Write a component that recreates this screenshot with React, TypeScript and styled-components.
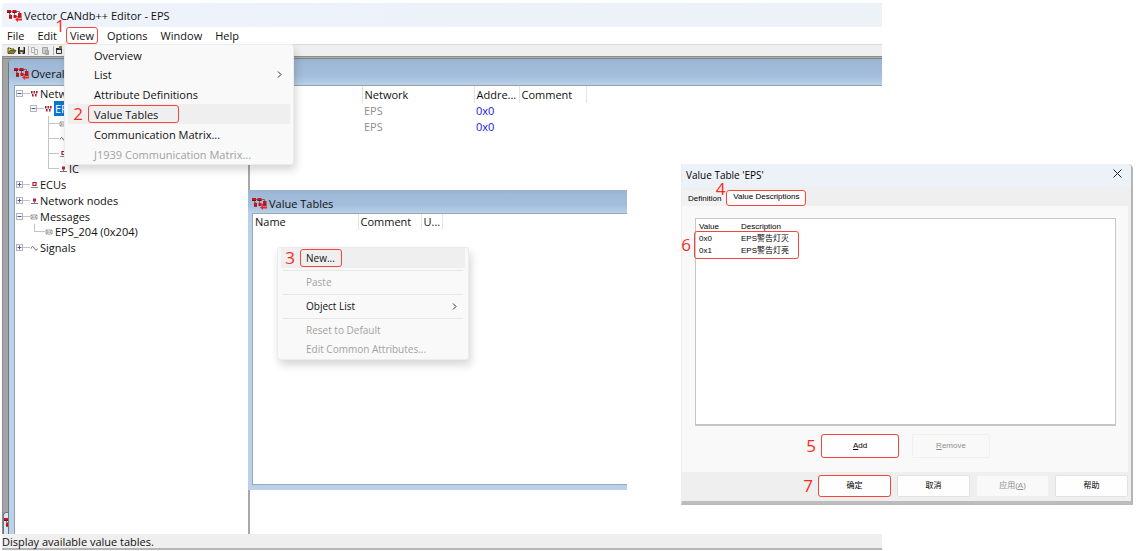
import React from 'react';
import styled, { createGlobalStyle, css } from 'styled-components';

const Global = createGlobalStyle`
  * { box-sizing: border-box; }
  body { margin: 0; background: #fff; color: #111; font: 11px/15px "Open Sans", "Noto Sans", "Noto Sans CJK SC", sans-serif; }
  ul { list-style: none; margin: 0; padding: 0; }
  button { font: inherit; color: inherit; background: none; border: 0; padding: 0; margin: 0; text-align: left; white-space: nowrap; }
`;

const Page = styled.main`
  position: relative;
  min-height: 100vh;
  padding: 3px 254px 1px 2px;
  display: flex;
`;

/* ---------- shared parts ---------- */
const TitleText = styled.h1`
  margin: 0;
  font-size: 11px;
  font-weight: 400;
  white-space: nowrap;
`;

const Highlight = styled.span`
  position: absolute;
  inset: 0;
  border: 1px solid #f5463c;
  border-radius: 3px;
  pointer-events: none;
`;

const StepNumber = styled.span`
  position: absolute;
  z-index: 5;
  right: calc(100% + 5px);
  top: 50%;
  transform: translateY(-50%);
  color: #fb2a20;
  font: 17px/16px "Open Sans", sans-serif;
`;

const CornerNumber = styled(StepNumber)`
  right: calc(100% + 1px);
  top: -7px;
  transform: none;
  line-height: 12px;
`;

const Marked = styled.div<{ $over?: boolean }>`
  position: relative;
  z-index: ${p => (p.$over ? 4 : 0)};
`;

function AppIcon() {
  return (
    <svg width="16" height="13" viewBox="0 0 16 13" aria-hidden="true">
      <path d="M3 2.500H12.500V5M2.500 3.500V5.500H3.500V8M7.500 3V7M9 7.500H12" stroke="#6b4a4c" strokeWidth="0.800" fill="none" />
      <path d="M0 1h4v3H0zM5.500 1h4v3h-4zM2 6h3v3.500H2zM6.500 6h3v3h-3zM11 4h3.500v4.500H11z" fill="#cf1219" />
      <path d="M0 3.200h4V4H0zM5.500 3.200h4V4h-4zM2 8.700h3v0.800H2zM11 7.700h3.500v0.800H11z" fill="#5a1114" />
      <path d="M8 10.500l3-2.500v1.500h4v2h-4V13z" fill="#f4262a" />
    </svg>
  );
}

/* ---------- editor window ---------- */
const Editor = styled.section`
  position: relative;
  flex: 1;
  min-width: 0;
  display: flex;
  flex-direction: column;
  border-bottom: 2px solid #b6b6b6;
`;

const TitleBar = styled.header`
  height: 24px;
  display: flex;
  align-items: center;
  gap: 1px;
  padding-left: 5px;
  background: linear-gradient(90deg, #eef3fc, #edf2f7);
  border-radius: 4px 0 0 0;
`;

const MenuBar = styled.nav`
  height: 18px;
  display: flex;
  align-items: center;
  gap: 5px;
  padding: 0 1px;
  border-bottom: 1px solid #dcdcdc;
`;

const MenuButton = styled.button`
  height: 17px;
  padding: 0 4px;
`;

const Toolbar = styled.div`
  height: 11px;
  display: flex;
  align-items: center;
  padding-left: 5px;
  background: #efefef;
`;

const Workspace = styled.div`
  flex: 1;
  display: flex;
  flex-direction: column;
  min-height: 474px;
  padding: 3px 0 0 5px;
  background: linear-gradient(#8d8d8d 0 1px, #adadad 1px 2px, #858585 2px 3px, #a3a3a3 3px);
  border-left: 1px solid #8c8c8c;
  position: relative;
`;

const MinimizedWindow = styled.div`
  position: absolute;
  left: 0;
  bottom: 0;
  width: 5px;
  height: 22px;
  overflow: hidden;
  padding-top: 4px;
  background: #dce6f1;
  border: 1px solid #71767c;
  border-width: 1px 0 0 1px;
  border-radius: 3px 0 0 0;
`;

const ChildWindow = styled.section`
  flex: 1;
  display: flex;
  flex-direction: column;
  background: #b9d1ea;
  border-left: 1px solid #6d7780;
  padding-left: 5px;
  border-radius: 5px 0 0 0;
`;

const ChildTitle = styled.header<{ $inset?: number }>`
  height: ${p => (p.$inset ? 23 : 26)}px;
  margin-left: -${p => p.$inset || 5}px;
  padding-left: ${p => p.$inset || 5}px;
  padding-top: 3px;
  display: flex;
  align-items: center;
  gap: 1px;
  flex: none;
  background: linear-gradient(#98b3d0, #9fbad8 20%, #a3bdda 65%, #b9d1ea);
  border-radius: ${p => (p.$inset ? 0 : 4)}px 0 0 0;
`;

const Panes = styled.div`
  flex: 1;
  display: grid;
  grid-template-columns: 235px 1fr;
  background: #fff;
  border: 1px solid #9c9fa4;
  border-width: 1px 0 0 1px;
`;

const TreePane = styled.ul`
  display: flex;
  flex-direction: column;
  gap: 1px;
  border-right: 2px solid #a8a8a8;
`;

const TreeRow = styled.div<{ $level: number }>`
  height: 15px;
  display: flex;
  align-items: center;
  padding-left: ${p => 1 + p.$level * 14}px;
  white-space: nowrap;
`;

const Expander = styled.button`
  flex: none;
  width: 7px;
  height: 7px;
  border: 1px solid #b5b5b5;
  background: #fafafa;
  display: flex;
  align-items: center;
  justify-content: center;
`;

const Twig = styled.span<{ $leaf?: boolean; $last?: boolean }>`
  flex: none;
  width: ${p => (p.$leaf ? 11 : 7)}px;
  height: 15px;
  margin-left: ${p => (p.$leaf ? 4 : 0)}px;
  border-left: ${p => (p.$leaf ? '1px solid #c4c4c4' : '0')};
  background: linear-gradient(transparent 7px, #c4c4c4 7px 8px, transparent 8px);
  ${p => p.$last && css`
    border-left: 0;
    background:
      linear-gradient(#c4c4c4, #c4c4c4) 0 0 / 1px 8px no-repeat,
      linear-gradient(transparent 7px, #c4c4c4 7px 8px, transparent 8px);
  `}
`;

const Selected = styled.span`
  background: #0f74d1;
  color: #fff;
  line-height: 15px;
  padding: 0 1px;
`;

const TreeIconBox = styled.svg`
  flex: none;
  width: 8px;
  height: 8px;
  margin-right: 2px;
`;

type IconKind = 'net' | 'ecu' | 'node' | 'msg' | 'sig';

function TreeIcon({ kind }: { kind: IconKind }) {
  return (
    <TreeIconBox viewBox="0 0 8 8" aria-hidden="true">
      {kind === 'net' && <path d="M1 1h1.600v2.500H1zM3.500 1h1.600v2.500H3.500zM6 1h1.600v2.500H6zM2 4h1.600v2.500H2zM5 4h1.600v2.500H5z" fill="#a3203c" />}
      {kind === 'ecu' && <><path d="M3 1.500h3v3H3z" stroke="#b01a38" strokeWidth="1.200" fill="#fff" /><path d="M1 6.500h7" stroke="#888" /></>}
      {kind === 'node' && <><path d="M3 1.500h3v3H3z" fill="#c2183a" /><path d="M4.500 4v2M1 6.500h7" stroke="#777" fill="none" /></>}
      {kind === 'msg' && <path d="M1 2h6v4H1zM1 2l3 2.500L7 2M1 6l2-2M7 6L5 4" stroke="#8c8c8c" strokeWidth="0.800" fill="none" />}
      {kind === 'sig' && <path d="M1 4.500C2 2 3 2 4 4s2.500 3 4 0.500" stroke="#555" fill="none" />}
    </TreeIconBox>
  );
}

function Toggle({ open }: { open?: boolean }) {
  return (
    <Expander aria-label={open ? 'Collapse' : 'Expand'}>
      <svg width="5" height="5" viewBox="0 0 5 5" aria-hidden="true">
        <path d={open ? 'M0.500 2.500h4' : 'M0.500 2.500h4M2.500 0.500v4'} stroke="#3c5fa8" />
      </svg>
    </Expander>
  );
}

function Branch({ label, kind, open, level = 0, selected }: { label: string; kind: IconKind; open?: boolean; level?: number; selected?: boolean }) {
  return (
    <TreeRow $level={level}>
      <Toggle open={open} />
      <Twig />
      <TreeIcon kind={kind} />
      {selected ? <Selected>{label}</Selected> : label}
    </TreeRow>
  );
}

function Leaf({ label, kind, level, last }: { label?: string; kind: IconKind; level: number; last?: boolean }) {
  return (
    <TreeRow $level={level}>
      <Twig $leaf $last={last} />
      <TreeIcon kind={kind} />
      {label}
    </TreeRow>
  );
}

const Grid = styled.table<{ $head: number; $width: number }>`
  border-collapse: collapse;
  table-layout: fixed;
  align-self: start;
  justify-self: start;
  width: ${p => p.$width}px;
  line-height: 16px;

  th, td {
    padding: 0 0 0 2px;
    font-weight: 400;
    text-align: left;
    white-space: nowrap;
    overflow: hidden;
    height: 16px;
  }
  th { height: ${p => p.$head}px; border-right: 1px solid #e3e3e3; }
`;

const Muted = styled.td` color: #8c8c8c; `;
const Address = styled.td` color: #1414e6; `;

const StatusBar = styled.footer`
  height: 14px;
  line-height: 15px;
  background: #efefef;
`;

/* ---------- popup menus ---------- */
const Popup = styled.div<{ $left: number; $top: number; $width: number; $small?: boolean }>`
  position: absolute;
  z-index: 2;
  left: ${p => p.$left}px;
  top: ${p => p.$top}px;
  width: ${p => p.$width}px;
  font-size: ${p => (p.$small ? 10 : 11)}px;
  background: #f9f9f9;
  border: 1px solid #ececec;
  border-radius: 3px;
  box-shadow: 2px 5px 8px rgba(0, 0, 0, 0.16);
`;

const ItemLine = styled.div<{ $h: number; $active?: boolean; $indent: number }>`
  display: flex;
  align-items: center;
  justify-content: space-between;
  height: ${p => p.$h}px;
  margin: 0 3px;
  padding: 0 8px 0 ${p => p.$indent}px;
  background: ${p => (p.$active ? '#efefef' : 'transparent')};
`;

const MenuItem = styled.button<{ $w?: number }>`
  display: block;
  height: 18px;
  width: ${p => (p.$w ? `${p.$w}px` : 'auto')};
  padding: 0 6px;
  &:disabled { color: #a2a2a2; }
`;

const Divider = styled.hr`
  height: 1px;
  margin: 2px 5px;
  border: 0;
  background: #e6e6e6;
`;

function Chevron() {
  return (
    <svg width="5" height="7" viewBox="0 0 5 7" aria-hidden="true">
      <path d="M1 0.500L4 3.500L1 6.500" stroke="#333" fill="none" />
    </svg>
  );
}

/* ---------- value tables window ---------- */
const FloatingWindow = styled.section`
  position: absolute;
  z-index: 1;
  left: 246px;
  right: 255px;
  top: 187px;
  height: 300px;
  display: flex;
  flex-direction: column;
  padding: 0 0 5px 4px;
  background: #b9d1ea;
`;

const FloatingBody = styled.div`
  position: relative;
  flex: 1;
  background: #fff;
  border: 1px solid #9aa7b5;
  border-right: 0;
`;

/* ---------- dialog ---------- */
const Dialog = styled.section`
  position: absolute;
  z-index: 3;
  right: 3px;
  top: 164px;
  width: 452px;
  background: #efefef;
  border-right: 2px solid #b4b4b4;
  border-bottom: 4px solid #bcbcbc;
  border-left: 1px solid #ededed;
  border-radius: 0 5px 0 0;
  font: 8px/12px "Liberation Sans", "Noto Sans CJK SC", sans-serif;
  color: #000;
`;

const DialogTitle = styled.header`
  height: 23px;
  display: flex;
  align-items: center;
  justify-content: space-between;
  padding: 0 9px 0 4px;
  background: #edf2f8;
  border-radius: 0 4px 0 0;
`;

const DialogHeading = styled.h2`
  margin: 0;
  font: 10px/15px "Open Sans", "Noto Sans", sans-serif;
`;

const TabList = styled.div`
  height: 19px;
  display: flex;
  align-items: flex-end;
`;

const Tab = styled.button<{ $active?: boolean }>`
  display: block;
  padding: ${p => (p.$active ? '1px 7px 3px' : '1px 5px 0 6px')};
  height: 16px;
  background: ${p => (p.$active ? '#fbfbfb' : '#f2f2f2')};
`;

const TabPanel = styled.div`
  margin-right: 3px;
  padding: 12px 12px 14px 13px;
  background: #f9f9f9;
`;

const ListBox = styled.div`
  min-height: 208px;
  background: #fff;
  border: 1px solid #c6c6c6;
  border-bottom-width: 2px;
`;

const ValueTable = styled.table`
  border-collapse: collapse;
  table-layout: fixed;
  width: 102px;
  th, td { padding: 0 0 0 3px; height: 12px; font-weight: 400; text-align: left; white-space: nowrap; }
  th { height: 14px; padding-top: 1px; }
  col:first-child { width: 42px; }
`;

const RowsHighlight = styled(Highlight)`
  inset: 12px -1px -2px -2px;
`;

const RowsNumber = styled(StepNumber)`
  top: 26px;
`;

const TableWrap = styled.div`
  position: relative;
  width: 102px;
`;

const Actions = styled.div<{ $end?: boolean }>`
  display: flex;
  justify-content: ${p => (p.$end ? 'flex-end' : 'center')};
  gap: ${p => (p.$end ? 6 : 13)}px;
  padding: ${p => (p.$end ? '3px 3px 4px' : '8px 0 0')};
`;

const PushButton = styled.button<{ $wide?: boolean }>`
  display: block;
  width: ${p => (p.$wide ? 78 : 73)}px;
  height: ${p => (p.$wide ? 24 : 22)}px;
  text-align: center;
  background: #fefefe;
  border: 1px solid #e2e2e2;
  border-radius: 2px;
  &:disabled { color: #8f8f8f; background: #f9f9f9; border-color: #f0f0f0; }
`;

export default function App() {
  return (
    <>
      <Global />
      <Page>
        <Editor>
          <TitleBar><AppIcon /><TitleText>Vector CANdb++ Editor - EPS</TitleText></TitleBar>
          <MenuBar aria-label="Main">
            <MenuButton>File</MenuButton>
            <MenuButton>Edit</MenuButton>
            <Marked $over>
              <MenuButton>View</MenuButton><Highlight /><CornerNumber>1</CornerNumber>
            </Marked>
            <MenuButton>Options</MenuButton>
            <MenuButton>Window</MenuButton>
            <MenuButton>Help</MenuButton>
          </MenuBar>
          <Toolbar>
            <svg width="56" height="9" viewBox="0 0 56 9" aria-hidden="true">
              <path d="M1 7V2h2l1 1h3v1" stroke="#4c4c19" fill="#e7dc69" />
              <path d="M1 7.500l2-3h6l-2 3z" fill="#87832c" stroke="#33330f" strokeWidth="0.700" />
              <path d="M11.500 1.500h6v6h-6z" fill="#55552a" stroke="#1f1f1f" />
              <path d="M13 1h3.500v3H13z" fill="#eee" /><path d="M13.500 6h2v2h-2z" fill="#ddd" />
              <path d="M21.500 0v9M46.500 0v9" stroke="#b4b4b4" />
              <path d="M24.500 1.500h3v5h-3zM27.500 3.500h3v5h-3z" fill="#eee" stroke="#b0b0b0" />
              <path d="M35.500 1.500h5v6h-5zM38.500 4.500h3v4h-3z" fill="#ccc" stroke="#a2a2a2" />
              <path d="M49.500 2.500h5v5h-5z" fill="#e9e9e9" stroke="#33334f" /><path d="M49 2h6v2h-6z" fill="#24243c" /><path d="M52 0h3v3h-3z" fill="#8a7b22" />
            </svg>
          </Toolbar>
          <Workspace>
            <MinimizedWindow><AppIcon /></MinimizedWindow>
            <ChildWindow>
              <ChildTitle><AppIcon /><TitleText as="h2">Overall View</TitleText></ChildTitle>
              <Panes>
                <TreePane>
                  <li>
                    <Branch label="Networks" kind="net" open />
                    <Branch label="EPS" kind="net" open level={1} selected />
                    <Leaf kind="msg" level={2} />
                    <Leaf kind="sig" level={2} />
                    <Leaf kind="ecu" level={2} />
                    <Leaf label="IC" kind="node" level={2} last />
                  </li>
                  <li><Branch label="ECUs" kind="ecu" /></li>
                  <li><Branch label="Network nodes" kind="node" /></li>
                  <li>
                    <Branch label="Messages" kind="msg" open />
                    <Leaf label="EPS_204 (0x204)" kind="msg" level={1} last />
                  </li>
                  <li><Branch label="Signals" kind="sig" /></li>
                </TreePane>
                <Grid $width={336} $head={17}>
                  <colgroup><col width="112" /><col width="112" /><col width="45" /><col width="67" /></colgroup>
                  <thead><tr><th /><th>Network</th><th>Addre...</th><th>Comment</th></tr></thead>
                  <tbody>
                    <tr><td /><Muted>EPS</Muted><Address>0x0</Address><td /></tr>
                    <tr><td /><Muted>EPS</Muted><Address>0x0</Address><td /></tr>
                  </tbody>
                </Grid>
              </Panes>
            </ChildWindow>
          </Workspace>
          <StatusBar>Display available value tables.</StatusBar>

          <Popup $left={62} $top={41} $width={230}>
            <ItemLine $h={20} $indent={20}><MenuItem>Overview</MenuItem></ItemLine>
            <ItemLine $h={19} $indent={20}><MenuItem>List</MenuItem><Chevron /></ItemLine>
            <ItemLine $h={20} $indent={20}><MenuItem>Attribute Definitions</MenuItem></ItemLine>
            <ItemLine $h={20} $indent={20} $active>
              <Marked><MenuItem $w={91}>Value Tables</MenuItem><Highlight /><StepNumber>2</StepNumber></Marked>
            </ItemLine>
            <ItemLine $h={20} $indent={20}><MenuItem>Communication Matrix...</MenuItem></ItemLine>
            <ItemLine $h={20} $indent={20}><MenuItem disabled>J1939 Communication Matrix...</MenuItem></ItemLine>
          </Popup>

          <FloatingWindow>
            <ChildTitle $inset={4}><AppIcon /><TitleText as="h2">Value Tables</TitleText></ChildTitle>
            <FloatingBody>
              <Grid $width={189} $head={16}>
                <colgroup><col width="105" /><col width="63" /><col width="21" /></colgroup>
                <thead><tr><th>Name</th><th>Comment</th><th>U...</th></tr></thead>
              </Grid>
              <Popup $left={24} $top={33} $width={192} $small>
                <ItemLine $h={20} $indent={19} $active>
                  <Marked><MenuItem $w={42}>New...</MenuItem><Highlight /><StepNumber>3</StepNumber></Marked>
                </ItemLine>
                <Divider />
                <ItemLine $h={19} $indent={19}><MenuItem disabled>Paste</MenuItem></ItemLine>
                <Divider />
                <ItemLine $h={19} $indent={19}><MenuItem>Object List</MenuItem><Chevron /></ItemLine>
                <Divider />
                <ItemLine $h={19} $indent={19}><MenuItem disabled>Reset to Default</MenuItem></ItemLine>
                <ItemLine $h={19} $indent={19}><MenuItem disabled>Edit Common Attributes...</MenuItem></ItemLine>
              </Popup>
            </FloatingBody>
          </FloatingWindow>
        </Editor>

        <Dialog role="dialog" aria-labelledby="dialog-title">
          <DialogTitle>
            <DialogHeading id="dialog-title">Value Table 'EPS'</DialogHeading>
            <button aria-label="Close">
              <svg width="9" height="9" viewBox="0 0 9 9" aria-hidden="true"><path d="M0.500 0.500l8 8M8.500 0.500l-8 8" stroke="#222" /></svg>
            </button>
          </DialogTitle>
          <TabList role="tablist">
            <Tab role="tab" aria-selected={false}>Definition</Tab>
            <Marked>
              <Tab role="tab" aria-selected $active>Value Descriptions</Tab>
              <Highlight /><CornerNumber>4</CornerNumber>
            </Marked>
          </TabList>
          <TabPanel role="tabpanel">
            <ListBox>
              <TableWrap>
                <ValueTable>
                  <colgroup><col /><col /></colgroup>
                  <thead><tr><th>Value</th><th>Description</th></tr></thead>
                  <tbody>
                    <tr><td>0x0</td><td>EPS警告灯灭</td></tr>
                    <tr><td>0x1</td><td>EPS警告灯亮</td></tr>
                  </tbody>
                </ValueTable>
                <RowsHighlight /><RowsNumber>6</RowsNumber>
              </TableWrap>
            </ListBox>
            <Actions>
              <Marked><PushButton $wide><u>A</u>dd</PushButton><Highlight /><StepNumber>5</StepNumber></Marked>
              <PushButton $wide disabled><u>R</u>emove</PushButton>
            </Actions>
          </TabPanel>
          <Actions $end>
            <Marked><PushButton>确定</PushButton><Highlight /><StepNumber>7</StepNumber></Marked>
            <PushButton>取消</PushButton>
            <PushButton disabled>应用(<u>A</u>)</PushButton>
            <PushButton>帮助</PushButton>
          </Actions>
        </Dialog>
      </Page>
    </>
  );
}
